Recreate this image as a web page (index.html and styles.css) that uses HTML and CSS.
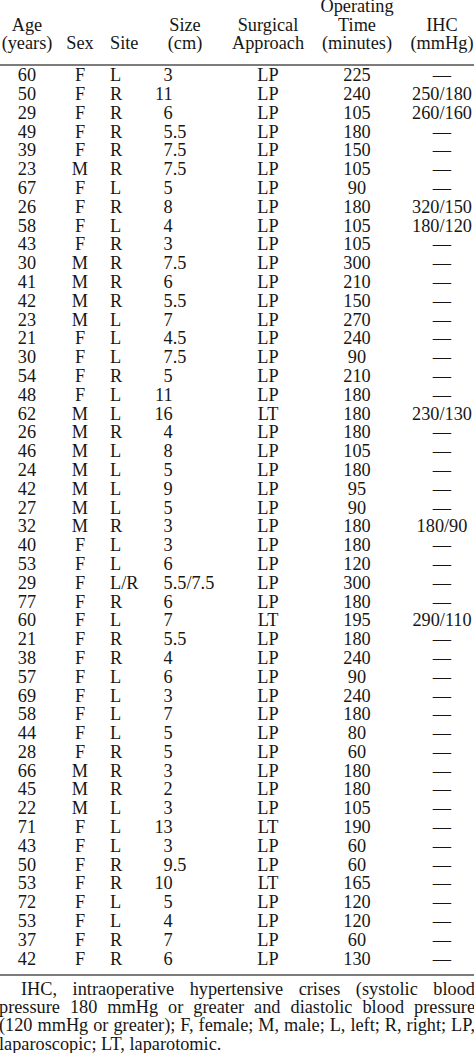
FILE: index.html
```html
<!DOCTYPE html>
<html lang="en">
<head>
<meta charset="utf-8">
<title>Patient characteristics</title>
<link rel="stylesheet" href="styles.css">
</head>
<body>
<div class="page">
  <div class="tbl">
    <table>
      <colgroup>
        <col class="c-age"><col class="c-sex"><col class="c-site"><col class="c-size"><col class="c-app"><col class="c-time"><col class="c-ihc">
      </colgroup>
      <thead>
        <tr>
          <th>Age<br>(years)</th>
          <th>Sex</th>
          <th class="site">Site</th>
          <th>Size<br>(cm)</th>
          <th>Surgical<br>Approach</th>
          <th>Operating<br>Time<br>(minutes)</th>
          <th>IHC<br>(mmHg)</th>
        </tr>
      </thead>
      <tbody>
        <tr><td>60</td><td>F</td><td class="site">L</td><td class="sz"><span class="i">3</span></td><td>LP</td><td>225</td><td>—</td></tr>
        <tr><td>50</td><td>F</td><td class="site">R</td><td class="sz"><span class="i">11</span></td><td>LP</td><td>240</td><td>250/180</td></tr>
        <tr><td>29</td><td>F</td><td class="site">R</td><td class="sz"><span class="i">6</span></td><td>LP</td><td>105</td><td>260/160</td></tr>
        <tr><td>49</td><td>F</td><td class="site">R</td><td class="sz"><span class="i">5</span>.5</td><td>LP</td><td>180</td><td>—</td></tr>
        <tr><td>39</td><td>F</td><td class="site">R</td><td class="sz"><span class="i">7</span>.5</td><td>LP</td><td>150</td><td>—</td></tr>
        <tr><td>23</td><td>M</td><td class="site">R</td><td class="sz"><span class="i">7</span>.5</td><td>LP</td><td>105</td><td>—</td></tr>
        <tr><td>67</td><td>F</td><td class="site">L</td><td class="sz"><span class="i">5</span></td><td>LP</td><td>90</td><td>—</td></tr>
        <tr><td>26</td><td>F</td><td class="site">R</td><td class="sz"><span class="i">8</span></td><td>LP</td><td>180</td><td>320/150</td></tr>
        <tr><td>58</td><td>F</td><td class="site">L</td><td class="sz"><span class="i">4</span></td><td>LP</td><td>105</td><td>180/120</td></tr>
        <tr><td>43</td><td>F</td><td class="site">R</td><td class="sz"><span class="i">3</span></td><td>LP</td><td>105</td><td>—</td></tr>
        <tr><td>30</td><td>M</td><td class="site">R</td><td class="sz"><span class="i">7</span>.5</td><td>LP</td><td>300</td><td>—</td></tr>
        <tr><td>41</td><td>M</td><td class="site">R</td><td class="sz"><span class="i">6</span></td><td>LP</td><td>210</td><td>—</td></tr>
        <tr><td>42</td><td>M</td><td class="site">R</td><td class="sz"><span class="i">5</span>.5</td><td>LP</td><td>150</td><td>—</td></tr>
        <tr><td>23</td><td>M</td><td class="site">L</td><td class="sz"><span class="i">7</span></td><td>LP</td><td>270</td><td>—</td></tr>
        <tr><td>21</td><td>F</td><td class="site">L</td><td class="sz"><span class="i">4</span>.5</td><td>LP</td><td>240</td><td>—</td></tr>
        <tr><td>30</td><td>F</td><td class="site">L</td><td class="sz"><span class="i">7</span>.5</td><td>LP</td><td>90</td><td>—</td></tr>
        <tr><td>54</td><td>F</td><td class="site">R</td><td class="sz"><span class="i">5</span></td><td>LP</td><td>210</td><td>—</td></tr>
        <tr><td>48</td><td>F</td><td class="site">L</td><td class="sz"><span class="i">11</span></td><td>LP</td><td>180</td><td>—</td></tr>
        <tr><td>62</td><td>M</td><td class="site">L</td><td class="sz"><span class="i">16</span></td><td>LT</td><td>180</td><td>230/130</td></tr>
        <tr><td>26</td><td>M</td><td class="site">R</td><td class="sz"><span class="i">4</span></td><td>LP</td><td>180</td><td>—</td></tr>
        <tr><td>46</td><td>M</td><td class="site">L</td><td class="sz"><span class="i">8</span></td><td>LP</td><td>105</td><td>—</td></tr>
        <tr><td>24</td><td>M</td><td class="site">L</td><td class="sz"><span class="i">5</span></td><td>LP</td><td>180</td><td>—</td></tr>
        <tr><td>42</td><td>M</td><td class="site">L</td><td class="sz"><span class="i">9</span></td><td>LP</td><td>95</td><td>—</td></tr>
        <tr><td>27</td><td>M</td><td class="site">L</td><td class="sz"><span class="i">5</span></td><td>LP</td><td>90</td><td>—</td></tr>
        <tr><td>32</td><td>M</td><td class="site">R</td><td class="sz"><span class="i">3</span></td><td>LP</td><td>180</td><td>180/90</td></tr>
        <tr><td>40</td><td>F</td><td class="site">L</td><td class="sz"><span class="i">3</span></td><td>LP</td><td>180</td><td>—</td></tr>
        <tr><td>53</td><td>F</td><td class="site">L</td><td class="sz"><span class="i">6</span></td><td>LP</td><td>120</td><td>—</td></tr>
        <tr><td>29</td><td>F</td><td class="site">L/R</td><td class="sz"><span class="i">5</span>.5/7.5</td><td>LP</td><td>300</td><td>—</td></tr>
        <tr><td>77</td><td>F</td><td class="site">R</td><td class="sz"><span class="i">6</span></td><td>LP</td><td>180</td><td>—</td></tr>
        <tr><td>60</td><td>F</td><td class="site">L</td><td class="sz"><span class="i">7</span></td><td>LT</td><td>195</td><td>290/110</td></tr>
        <tr><td>21</td><td>F</td><td class="site">R</td><td class="sz"><span class="i">5</span>.5</td><td>LP</td><td>180</td><td>—</td></tr>
        <tr><td>38</td><td>F</td><td class="site">R</td><td class="sz"><span class="i">4</span></td><td>LP</td><td>240</td><td>—</td></tr>
        <tr><td>57</td><td>F</td><td class="site">L</td><td class="sz"><span class="i">6</span></td><td>LP</td><td>90</td><td>—</td></tr>
        <tr><td>69</td><td>F</td><td class="site">L</td><td class="sz"><span class="i">3</span></td><td>LP</td><td>240</td><td>—</td></tr>
        <tr><td>58</td><td>F</td><td class="site">L</td><td class="sz"><span class="i">7</span></td><td>LP</td><td>180</td><td>—</td></tr>
        <tr><td>44</td><td>F</td><td class="site">L</td><td class="sz"><span class="i">5</span></td><td>LP</td><td>80</td><td>—</td></tr>
        <tr><td>28</td><td>F</td><td class="site">R</td><td class="sz"><span class="i">5</span></td><td>LP</td><td>60</td><td>—</td></tr>
        <tr><td>66</td><td>M</td><td class="site">R</td><td class="sz"><span class="i">3</span></td><td>LP</td><td>180</td><td>—</td></tr>
        <tr><td>45</td><td>M</td><td class="site">R</td><td class="sz"><span class="i">2</span></td><td>LP</td><td>180</td><td>—</td></tr>
        <tr><td>22</td><td>M</td><td class="site">L</td><td class="sz"><span class="i">3</span></td><td>LP</td><td>105</td><td>—</td></tr>
        <tr><td>71</td><td>F</td><td class="site">L</td><td class="sz"><span class="i">13</span></td><td>LT</td><td>190</td><td>—</td></tr>
        <tr><td>43</td><td>F</td><td class="site">L</td><td class="sz"><span class="i">3</span></td><td>LP</td><td>60</td><td>—</td></tr>
        <tr><td>50</td><td>F</td><td class="site">R</td><td class="sz"><span class="i">9</span>.5</td><td>LP</td><td>60</td><td>—</td></tr>
        <tr><td>53</td><td>F</td><td class="site">R</td><td class="sz"><span class="i">10</span></td><td>LT</td><td>165</td><td>—</td></tr>
        <tr><td>72</td><td>F</td><td class="site">L</td><td class="sz"><span class="i">5</span></td><td>LP</td><td>120</td><td>—</td></tr>
        <tr><td>53</td><td>F</td><td class="site">L</td><td class="sz"><span class="i">4</span></td><td>LP</td><td>120</td><td>—</td></tr>
        <tr><td>37</td><td>F</td><td class="site">R</td><td class="sz"><span class="i">7</span></td><td>LP</td><td>60</td><td>—</td></tr>
        <tr><td>42</td><td>F</td><td class="site">R</td><td class="sz"><span class="i">6</span></td><td>LP</td><td>130</td><td>—</td></tr>
      </tbody>
    </table>
  </div>
  <div class="note">
    <div class="ln first">IHC, intraoperative hypertensive crises (systolic blood</div>
    <div class="ln">pressure 180 mmHg or greater and diastolic blood pressure</div>
    <div class="ln tight">(120 mmHg or greater); F, female; M, male; L, left; R, right; LP,</div>
    <div class="ln-last">laparoscopic; LT, laparotomic.</div>
  </div>
</div>
</body>
</html>
```
FILE: styles.css
```css
html, body {
  margin: 0;
  padding: 0;
  background: #ffffff;
  overflow: hidden;
}

.page {
  margin-left: -1px;
  margin-top: -3.2px;
  width: 486px;
  font-family: "Liberation Serif", "Times New Roman", serif;
  font-size: 18.3px;
  line-height: 18.8px;
  color: #161616;
}

.tbl {
  width: 476px;
  border-bottom: 2px solid #7c7c7c;
  padding-bottom: 5.4px;
}

table {
  border-collapse: collapse;
  table-layout: fixed;
  width: 487px;
}

.c-age { width: 56px; }
.c-sex { width: 50px; }
.c-site { width: 45px; }
.c-size { width: 70px; }
.c-app { width: 96px; }
.c-time { width: 82px; }
.c-ihc { width: 88px; }

th {
  font-weight: normal;
  vertical-align: bottom;
  text-align: center;
  padding: 0 0 11px 0;
  line-height: 18.8px;
  white-space: nowrap;
  border-bottom: 2px solid #7c7c7c;
}

td {
  padding: 0;
  height: 18.8px;
  line-height: 18.8px;
  text-align: center;
  white-space: nowrap;
}

th.site, td.site {
  text-align: left;
  padding-left: 5px;
}

td.sz {
  text-align: left;
}

td.sz .i {
  display: inline-block;
  width: 22.7px;
  text-align: right;
}

.note {
  width: 476px;
  margin-top: 4px;
  line-height: 18.3px;
}

.ln {
  text-align: justify;
  text-align-last: justify;
  white-space: nowrap;
}

.ln.first {
  text-indent: 22px;
}

.ln.tight {
  word-spacing: -0.3px;
}

.ln-last {
  text-align: left;
  white-space: nowrap;
}
```
